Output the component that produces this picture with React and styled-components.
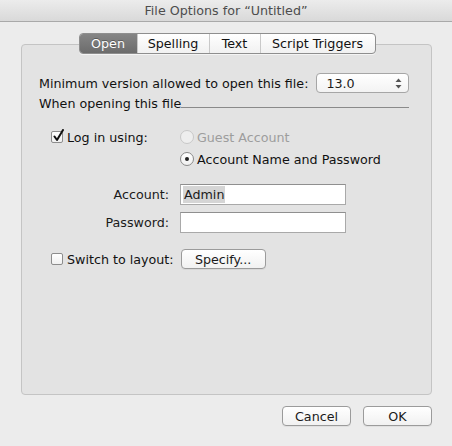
import React from 'react';
import styled, { createGlobalStyle } from 'styled-components';

const FONT = '"DejaVu Sans", "Liberation Sans", sans-serif';
const SIZE = '12.7px';

const Global = createGlobalStyle`
  html, body {
    margin: 0;
    padding: 0;
    background: #ececec;
  }
  body {
    font-family: ${FONT};
    font-size: ${SIZE};
    color: #1a1a1a;
  }
`;

const Window = styled.div`
  width: 452px;
  height: 446px;
  background: #ececec;
  display: flex;
  flex-direction: column;
  overflow: hidden;
`;

const TitleBar = styled.div`
  height: 21px;
  line-height: 21px;
  text-align: center;
  color: #4d4d4d;
  font-size: ${SIZE};
  background: linear-gradient(#ececec, #d9d9d9);
  border-bottom: 1px solid #a9a9a9;
`;

const Body = styled.div`
  flex: 1;
  display: flex;
  flex-direction: column;
  padding: 11px 20px 0 20px;
`;

const Tabs = styled.div`
  align-self: center;
  position: relative;
  z-index: 1;
  display: flex;
  height: 19px;
  margin-left: 2px;
  border: 1px solid #8e8e8e;
  border-radius: 4px;
  overflow: hidden;
  background: linear-gradient(#ffffff, #f1f1f1);
  box-shadow: 0 1px 0 rgba(255, 255, 255, 0.6);
`;

const Tab = styled.div`
  display: flex;
  align-items: center;
  justify-content: center;
  width: ${p => p.w}px;
  font-size: ${SIZE};
  color: ${p => (p.active ? '#ffffff' : '#111')};
  background: ${p => (p.active ? 'linear-gradient(#858585, #6c6c6c)' : 'transparent')};
  border-left: ${p => (p.first ? 'none' : '1px solid #c9c9c9')};
  text-shadow: ${p => (p.active ? '0 -1px 0 rgba(0,0,0,0.3)' : 'none')};
`;

const Panel = styled.div`
  height: 351px;
  margin-top: -10px;
  margin-left: 1px;
  box-sizing: border-box;
  background: #e3e3e3;
  border: 1px solid #c4c4c4;
  border-radius: 4px;
  padding: 28px 22px 0 17px;
  display: flex;
  flex-direction: column;
`;

const Row = styled.div`
  display: flex;
  align-items: ${p => (p.top ? 'flex-start' : 'center')};
  height: ${p => p.h || 20}px;
  margin-top: ${p => p.mt || 0}px;
  padding-left: ${p => p.pl || 0}px;
`;

const Text = styled.span`
  font-size: ${SIZE};
  color: ${p => (p.disabled ? '#9d9d9d' : '#111')};
  white-space: nowrap;
`;

const Popup = styled.div`
  margin-left: 8px;
  width: 95px;
  height: 20px;
  box-sizing: border-box;
  border: 1px solid #a6a6a6;
  border-radius: 4px;
  background: linear-gradient(#ffffff, #f3f3f3);
  display: flex;
  align-items: center;
  justify-content: space-between;
  padding: 0 6px 0 9px;
  font-size: ${SIZE};
`;

const SectionRule = styled.div`
  flex: 1;
  height: 1px;
  background: #8a8a8a;
  align-self: flex-end;
  margin-bottom: 3px;
`;

const CheckLabel = styled.label`
  display: flex;
  align-items: center;
  gap: 4px;
  height: 16px;
  width: ${p => p.w || 'auto'};
`;

const Box = styled.span`
  position: relative;
  width: 12px;
  height: 12px;
  box-sizing: border-box;
  border: 1px solid #8d8d8d;
  border-radius: 2px;
  background: linear-gradient(#ffffff, #f0f0f0);
  flex-shrink: 0;
  svg {
    position: absolute;
    left: 0px;
    top: -3px;
  }
`;

const RadioGroup = styled.div`
  display: flex;
  flex-direction: column;
  gap: 6px;
`;

const RadioLabel = styled.label`
  display: flex;
  align-items: center;
  gap: 3px;
  height: 16px;
`;

const Radio = styled.span`
  width: 14px;
  height: 14px;
  box-sizing: border-box;
  border-radius: 50%;
  border: 1px solid ${p => (p.disabled ? '#c8c8c8' : '#8a8a8a')};
  background: ${p => (p.disabled ? '#eeeeee' : 'linear-gradient(#ffffff, #f0f0f0)')};
  display: flex;
  align-items: center;
  justify-content: center;
  &::after {
    content: '';
    display: ${p => (p.checked ? 'block' : 'none')};
    width: 4px;
    height: 4px;
    border-radius: 50%;
    background: #222;
  }
`;

const FieldLabel = styled.span`
  width: 130px;
  text-align: right;
  font-size: ${SIZE};
  padding-right: 11px;
  white-space: nowrap;
`;

const Field = styled.div`
  width: 166px;
  height: 21px;
  box-sizing: border-box;
  border: 1px solid #a9a9a9;
  border-top-color: #8f8f8f;
  background: #ffffff;
  display: flex;
  align-items: center;
  padding-left: 2px;
  font-size: ${SIZE};
`;

const Selected = styled.span`
  background: #d5d5d5;
  padding: 1px 1px;
`;

const Button = styled.div`
  width: ${p => p.w}px;
  height: 20px;
  box-sizing: border-box;
  border: 1px solid #9b9b9b;
  border-radius: 4px;
  background: linear-gradient(#ffffff, #f1f1f1);
  display: flex;
  align-items: center;
  justify-content: center;
  font-size: ${SIZE};
  margin-left: ${p => p.ml || 0}px;
  box-shadow: 0 1px 0 rgba(0, 0, 0, 0.05);
`;

const Footer = styled.div`
  display: flex;
  justify-content: flex-end;
  gap: 12px;
  margin-top: 11px;
`;

const Check = () => (
  <svg width="13" height="13" viewBox="0 0 13 13">
    <path d="M2.5 7.5 L5 11 L11 1" fill="none" stroke="#111" strokeWidth="2" strokeLinecap="round" strokeLinejoin="round" />
  </svg>
);

const Arrows = () => (
  <svg width="7" height="11" viewBox="0 0 7 11">
    <path d="M3.5 0.5 L6.5 4 L0.5 4 Z" fill="#555" />
    <path d="M3.5 10.5 L6.5 7 L0.5 7 Z" fill="#555" />
  </svg>
);

export default function App() {
  return (
    <Window>
      <Global />
      <TitleBar>File Options for “Untitled”</TitleBar>
      <Body>
        <Tabs>
          <Tab w={57} active first>Open</Tab>
          <Tab w={71}>Spelling</Tab>
          <Tab w={50}>Text</Tab>
          <Tab w={114}>Script Triggers</Tab>
        </Tabs>
        <Panel>
          <Row>
            <Text>Minimum version allowed to open this file:</Text>
            <Popup>
              <span>13.0</span>
              <Arrows />
            </Popup>
          </Row>
          <Row h={16} mt={2}>
            <Text>When opening this file</Text>
            <SectionRule />
          </Row>
          <Row h={38} mt={18} pl={12} top>
            <CheckLabel w="129px">
              <Box><Check /></Box>
              <Text>Log in using:</Text>
            </CheckLabel>
            <RadioGroup>
              <RadioLabel>
                <Radio disabled />
                <Text disabled>Guest Account</Text>
              </RadioLabel>
              <RadioLabel>
                <Radio checked />
                <Text>Account Name and Password</Text>
              </RadioLabel>
            </RadioGroup>
          </Row>
          <Row h={21} mt={17}>
            <FieldLabel>Account:</FieldLabel>
            <Field><Selected>Admin</Selected></Field>
          </Row>
          <Row h={21} mt={7}>
            <FieldLabel>Password:</FieldLabel>
            <Field />
          </Row>
          <Row mt={16} pl={12}>
            <CheckLabel>
              <Box />
              <Text>Switch to layout:</Text>
            </CheckLabel>
            <Button w={85} ml={7}>Specify...</Button>
          </Row>
        </Panel>
        <Footer>
          <Button w={69}>Cancel</Button>
          <Button w={69}>OK</Button>
        </Footer>
      </Body>
    </Window>
  );
}
